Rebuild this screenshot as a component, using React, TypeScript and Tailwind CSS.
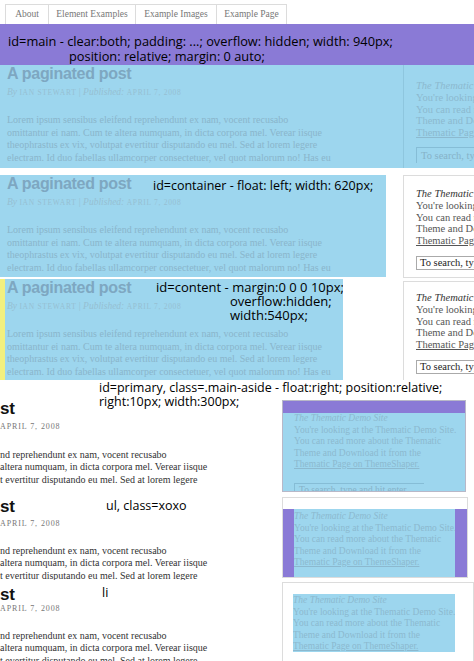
const lorem = [
  "Lorem ipsum sensibus eleifend reprehendunt ex nam, vocent recusabo",
  "omittantur ei nam. Cum te altera numquam, in dicta corpora mel. Verear iisque",
  "theophrastus ex vix, volutpat evertitur disputando eu mel. Sed at lorem legere",
  "electram. Id duo fabellas ullamcorper consectetuer, vel quot malorum no! Has eu",
];

const cropped = [
  "nd reprehendunt ex nam, vocent recusabo",
  "altera numquam, in dicta corpora mel. Verear iisque",
  "t evertitur disputando eu mel. Sed at lorem legere",
];

const widget = [
  "You're looking at the Thematic Demo Site.",
  "You can read more about the Thematic",
  "Theme and Download it from the",
];

function Tabs() {
  const tabs = [
    { t: "About", w: "w-[43px]" },
    { t: "Element Examples", w: "w-[87px]" },
    { t: "Example Images", w: "w-[81px]" },
    { t: "Example Page", w: "w-[71px]" },
  ];
  return (
    <div className="flex h-[24px] pt-[4px] pl-[5px] bg-white">
      {tabs.map((x, i) => (
        <div
          key={x.t}
          className={`${x.w} h-[20px] flex items-center justify-center border-t border-l border-[#dcdcdc] ${
            i === tabs.length - 1 ? "border-r" : ""
          } text-[9.5px] text-[#777] whitespace-nowrap`}
        >
          {x.t}
        </div>
      ))}
    </div>
  );
}

function Label({ children, className }: { children: React.ReactNode; className: string }) {
  return (
    <div className={`absolute font-['Open_Sans',sans-serif] leading-[14px] text-black whitespace-nowrap ${className}`}>
      {children}
    </div>
  );
}

function BluePost() {
  return (
    <div className="text-[#8ab5cb]">
      <h2 className="font-['Liberation_Sans',sans-serif] font-bold text-[16px] tracking-[-0.3px] leading-[17px] text-[#7ea7c1] whitespace-nowrap">
        A paginated post
      </h2>
      <div className="mt-[5px] leading-[10px] text-[9.5px] text-[#96bfd2] whitespace-nowrap">
        <span className="italic">By </span>
        <span className="text-[7.5px] tracking-[0.7px]">IAN STEWART</span>
        <span> | </span>
        <span className="italic">Published: </span>
        <span className="text-[7.5px] tracking-[0.7px]">APRIL 7, 2008</span>
      </div>
      <div className="mt-[16px] text-[10px] leading-[12.6px]">
        {lorem.map((l) => (
          <div key={l} className="whitespace-nowrap">
            {l}
          </div>
        ))}
      </div>
    </div>
  );
}

function WidgetText({ tone, big }: { tone: "blue" | "white"; big?: boolean }) {
  const c = tone === "blue" ? "text-[#8cb9cf]" : "text-[#555]";
  const s = big ? "text-[10.5px] leading-[11.75px]" : "text-[9.5px] leading-[11.5px]";
  return (
    <div className={`whitespace-nowrap ${s} ${c}`}>
      <div className={`italic ${tone === "white" ? "text-[#333]" : ""}`}>The Thematic Demo Site</div>
      {widget.map((l) => (
        <div key={l}>{l}</div>
      ))}
      <div className="underline">Thematic Page on ThemeShaper.</div>
    </div>
  );
}

function WhitePost({ lines, by, lo }: { lines: number; by: string; lo: string }) {
  return (
    <div className="text-[#333]">
      <h2 className="font-['Liberation_Sans',sans-serif] font-bold text-[17px] tracking-[-0.3px] leading-[17px] text-[#111]">
        st
      </h2>
      <div className={`${by} leading-[10px] text-[8px] tracking-[0.9px] text-[#777] whitespace-nowrap`}>
        APRIL 7, 2008
      </div>
      <div className={`${lo} text-[10px] leading-[12.3px]`}>
        {cropped.slice(0, lines).map((l) => (
          <div key={l} className="whitespace-nowrap">
            {l}
          </div>
        ))}
      </div>
    </div>
  );
}

export default function App() {
  return (
    <div className="w-[474px] h-[661px] overflow-hidden bg-white font-['Liberation_Serif',serif]">
      <Tabs />

      <div className="h-[41px] bg-[#8a7ad6] pt-[10px] pl-[8px] font-['Open_Sans',sans-serif] text-[12.8px] leading-[15px] text-black whitespace-nowrap">
        <div>id=main - clear:both; padding: ...; overflow: hidden; width: 940px;</div>
        <div className="pl-[61px]">position: relative; margin: 0 auto;</div>
      </div>

      {/* main */}
      <div className="flex h-[103px] bg-[#9dd6ee] overflow-hidden">
        <div className="w-[403px] shrink-0 pl-[7px]">
          <BluePost />
        </div>
        <div className="flex-1 min-w-0 border-l border-[#8ec6de] pl-[12px] pt-[15px] overflow-hidden">
          <WidgetText tone="blue" big />
          <div className="mt-[8px] h-[16px] border-t border-l border-[#86bdd6] pl-[4px] text-[10.5px] leading-[15px] text-[#86b2c8] whitespace-nowrap">
            To search, type and hit enter
          </div>
        </div>
      </div>

      <div className="h-[7px]" />

      {/* container */}
      <div className="flex h-[104px] overflow-hidden">
        <div className="relative w-[386px] h-[102px] shrink-0 bg-[#9dd6ee] pl-[7px] overflow-hidden">
          <BluePost />
          <Label className="left-[153px] top-[4px] text-[12.5px]">id=container - float: left; width: 620px;</Label>
        </div>
        <div className="ml-[17px] flex-1 min-w-0 h-[103px] border border-r-0 border-[#dcdcdc] pl-[12px] pt-[12px] overflow-hidden">
          <WidgetText tone="white" big />
          <div className="mt-[9px] h-[14px] border border-r-0 border-[#aaa] pl-[3px] text-[10.5px] leading-[12px] text-[#222] whitespace-nowrap">
            To search, type and hit enter
          </div>
        </div>
      </div>

      {/* content */}
      <div className="flex h-[101px] overflow-hidden">
        <div className="w-[5px] shrink-0 bg-[#f2f07f]" />
        <div className="relative w-[338px] shrink-0 bg-[#9dd6ee] pl-[2px] overflow-hidden">
          <BluePost />
          <Label className="left-[151px] top-[1px] text-[13px] leading-[14.5px]">
            <div>id=content - margin:0 0 0 10px;</div>
            <div className="pl-[74px]">overflow:hidden;</div>
            <div className="pl-[74px]">width:540px;</div>
          </Label>
        </div>
        <div className="ml-[60px] mt-[2px] flex-1 min-w-0 border-t border-l border-[#dcdcdc] pl-[12px] pt-[10px] overflow-hidden">
          <WidgetText tone="white" big />
          <div className="mt-[9px] h-[14px] border border-r-0 border-[#aaa] pl-[3px] text-[10.5px] leading-[12px] text-[#222] whitespace-nowrap">
            To search, type and hit enter
          </div>
        </div>
      </div>

      {/* primary */}
      <div className="relative flex h-[114px] overflow-hidden">
        <Label className="left-[99px] top-[1px] text-[12.5px]">
          <div>id=primary, class=.main-aside - float:right; position:relative;</div>
          <div>right:10px; width:300px;</div>
        </Label>
        <div className="w-[282px] shrink-0 pt-[20px] overflow-hidden">
          <WhitePost lines={3} by="mt-[5px]" lo="mt-[17px]" />
        </div>
        <div className="mt-[20px] w-[184px] h-[92px] border border-[#b8b8c8] flex flex-col overflow-hidden">
          <div className="h-[12px] shrink-0 bg-[#8a7ad6]" />
          <div className="flex-1 bg-[#9dd6ee] pl-[11px] overflow-hidden">
            <WidgetText tone="blue" />
            <div className="mt-[12px] w-[130px] h-[14px] border-t border-l border-[#86bdd6] pl-[4px] text-[9.5px] leading-[13px] text-[#86b2c8] whitespace-nowrap">
              To search, type and hit enter
            </div>
          </div>
        </div>
      </div>

      {/* ul */}
      <div className="relative flex h-[86px] overflow-hidden">
        <Label className="left-[106px] top-[5px] text-[12.5px]">ul, class=xoxo</Label>
        <div className="w-[282px] shrink-0 pt-[4px] overflow-hidden">
          <WhitePost lines={3} by="mt-[4px]" lo="mt-[16px]" />
        </div>
        <div className="mt-[3px] w-[186px] h-[81px] border border-[#dcdcdc] flex flex-col overflow-hidden">
          <div className="h-[11px] shrink-0 bg-white" />
          <div className="flex flex-1">
            <div className="w-[11px] bg-[#8a7ad6]" />
            <div className="flex-1 bg-[#9dd6ee] pt-[2px] overflow-hidden">
              <WidgetText tone="blue" />
            </div>
            <div className="w-[12px] bg-[#8a7ad6]" />
          </div>
        </div>
      </div>

      {/* li */}
      <div className="relative flex h-[81px] overflow-hidden">
        <Label className="left-[102px] top-[6px] text-[12.5px]">li</Label>
        <div className="w-[282px] shrink-0 pt-[6px] overflow-hidden">
          <WhitePost lines={3} by="mt-[1px]" lo="mt-[16px]" />
        </div>
        <div className="mt-[2px] w-[186px] flex-1 border border-b-0 border-[#dcdcdc] pt-[11px] pl-[10px] overflow-hidden">
          <div className="w-[162px] h-[58px] bg-[#9dd6ee] pt-[1px] overflow-hidden">
            <WidgetText tone="blue" />
          </div>
        </div>
      </div>
    </div>
  );
}
